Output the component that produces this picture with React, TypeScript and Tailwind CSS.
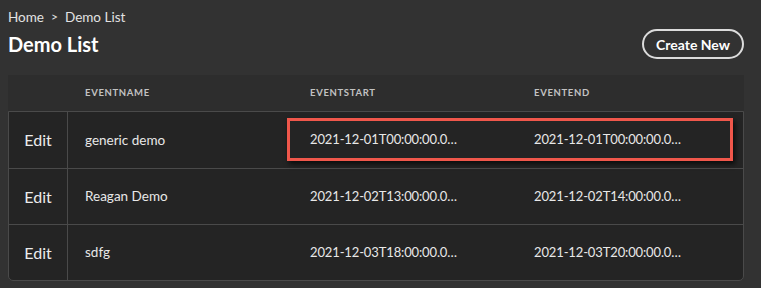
import React from "react";

const rows = [
    { name: "generic demo", start: "2021-12-01T00:00:00.0…", end: "2021-12-01T00:00:00.0…" },
    { name: "Reagan Demo", start: "2021-12-02T13:00:00.0…", end: "2021-12-02T14:00:00.0…" },
    { name: "sdfg", start: "2021-12-03T18:00:00.0…", end: "2021-12-03T20:00:00.0…" },
];

export default function App() {
    return (
        <div className="w-[761px] h-[288px] bg-[#323232] text-[#e6e6e6] overflow-hidden" style={{ fontFamily: "Lato, 'Noto Sans', sans-serif" }}>
            <div className="px-2 pt-[8px]">
                <div className="flex items-center gap-[7px] text-[13.5px] leading-[18px] text-[#e2e2e2]">
                    <span>Home</span>
                    <span className="text-[12px]">&gt;</span>
                    <span>Demo List</span>
                </div>
                <div className="flex h-[30px] items-center justify-between mt-[3px] w-[736px]">
                    <h1 className="text-[20px] leading-[26px] font-bold text-white">Demo List</h1>
                    <button className="h-[30px] w-[102px] rounded-full border-2 border-[#dcdcdc] text-[14px] font-bold text-white">
                        Create New
                    </button>
                </div>

                <div className="relative mt-[16px] w-[736px]">
                    <div className="flex h-[36px] items-center bg-[#2d2d2d] text-[9.5px] font-bold tracking-[0.07em] text-[#c2c2c2]">
                        <div className="w-[60px]" />
                        <div className="w-[225px] pl-[17px]">EVENTNAME</div>
                        <div className="w-[224px] pl-[17px]">EVENTSTART</div>
                        <div className="flex-1 pl-[17px]">EVENTEND</div>
                    </div>
                    <div className="border border-[#4a4a4a] rounded-b-[5px] bg-[#242424]">
                        {rows.map((r, i) => (
                            <div key={r.name} className={`flex h-[56px] items-center text-[14px] ${i > 0 ? "border-t border-[#4a4a4a]" : ""}`}>
                                <div className="w-[59px] h-full flex items-center justify-center border-r border-[#4a4a4a] text-[16px] text-[#ececec]">
                                    Edit
                                </div>
                                <div className="w-[225px] pl-[17px] text-[13.5px] text-[#e8e8e8]">{r.name}</div>
                                <div className="w-[224px] pl-[17px] text-[13px] tracking-[-0.01em] text-[#e8e8e8]">{r.start}</div>
                                <div className="flex-1 pl-[17px] text-[13px] tracking-[-0.01em] text-[#e8e8e8]">{r.end}</div>
                            </div>
                        ))}
                    </div>
                    <div className="absolute left-[279px] top-[43px] w-[446px] h-[43px] border-[3px] border-[#f0574b] shadow-[2px_3px_5px_rgba(0,0,0,0.7)]" />
                </div>
            </div>
        </div>
    );
}
